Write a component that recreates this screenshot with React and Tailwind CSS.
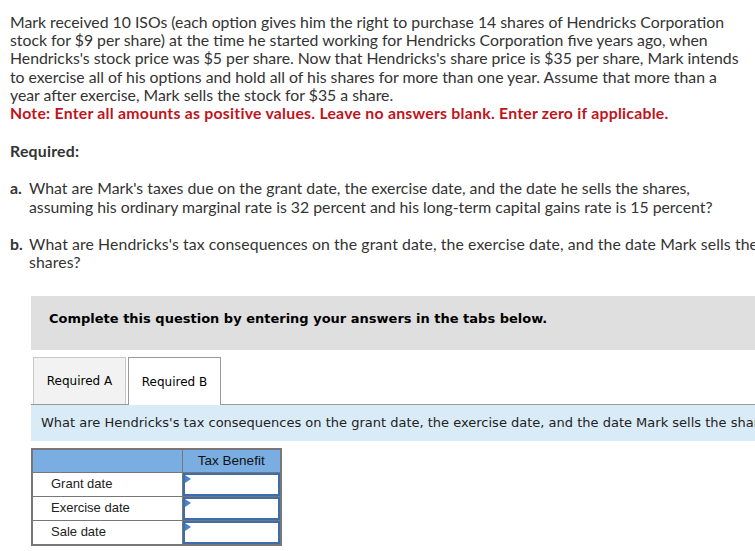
const bodyFont = { fontFamily: "Lato, 'Open Sans', sans-serif" };

function Line({ children }) {
  return <div className="whitespace-nowrap">{children}</div>;
}

function InputCell() {
  return (
    <td className="border border-[#777] p-0 h-[24px]">
      <div className="relative h-[23px] border-2 border-[#3c6eae] bg-white">
        <span className="absolute left-0 top-0 w-0 h-0 border-t-[4px] border-b-[4px] border-l-[6px] border-t-transparent border-b-transparent border-l-[#4a82c8]" />
      </div>
    </td>
  );
}

export default function App() {
  const rows = ["Grant date", "Exercise date", "Sale date"];
  return (
    <div className="w-[755px] h-[551px] overflow-hidden bg-white text-[#333]">
      <div className="pl-[10px] pt-[13px] text-[15.8px] leading-[18.2px]" style={bodyFont}>
        <Line>Mark received 10 ISOs (each option gives him the right to purchase 14 shares of Hendricks Corporation</Line>
        <Line>stock for $9 per share) at the time he started working for Hendricks Corporation five years ago, when</Line>
        <Line>Hendricks's stock price was $5 per share. Now that Hendricks's share price is $35 per share, Mark intends</Line>
        <Line>to exercise all of his options and hold all of his shares for more than one year. Assume that more than a</Line>
        <Line>year after exercise, Mark sells the stock for $35 a share.</Line>
        <Line>
          <span className="font-bold tracking-[0.25px] text-[#c0141c]">Note: Enter all amounts as positive values. Leave no answers blank. Enter zero if applicable.</span>
        </Line>

        <div className="mt-[20px] font-bold tracking-[0.25px]">Required:</div>

        <div className="mt-[19px] flex">
          <span className="font-bold w-[19px] shrink-0">a.</span>
          <div>
            <Line>What are Mark's taxes due on the grant date, the exercise date, and the date he sells the shares,</Line>
            <Line>assuming his ordinary marginal rate is 32 percent and his long-term capital gains rate is 15 percent?</Line>
          </div>
        </div>

        <div className="mt-[19px] flex tracking-[0.1px]">
          <span className="font-bold w-[19px] shrink-0">b.</span>
          <div>
            <Line>What are Hendricks's tax consequences on the grant date, the exercise date, and the date Mark sells the</Line>
            <Line>shares?</Line>
          </div>
        </div>
      </div>

      <div className="ml-[31px] mt-[25px]" style={{ fontFamily: "'DejaVu Sans', Verdana, sans-serif" }}>
        <div className="h-[54px] bg-[#dfdfdf] pt-[15px] pl-[18px] text-[13px] leading-[16px] font-bold text-black whitespace-nowrap">
          Complete this question by entering your answers in the tabs below.
        </div>

        <div className="mt-[7px] flex gap-[2px] pl-[2px] border-b border-[#999] text-[12px] text-black">
          <div className="w-[93px] h-[47px] flex items-center justify-center bg-[#f2f2f2] border border-b-0 border-[#c8c8c8]">
            Required A
          </div>
          <div className="w-[93px] h-[48px] -mb-px flex items-center justify-center bg-white border border-b-0 border-[#999]">
            Required B
          </div>
        </div>

        <div className="h-[36px] bg-[#daebf8] pt-[10px] pl-[10px] text-[13px] leading-[16px] text-[#222] whitespace-nowrap overflow-hidden">
          What are Hendricks's tax consequences on the grant date, the exercise date, and the date Mark sells the shares?
        </div>

        <table
          className="mt-[7px] border-collapse border-2 border-[#777] text-[13px] text-[#222]"
          style={{ fontFamily: "'Liberation Sans', Arial, sans-serif" }}
        >
          <thead>
            <tr className="bg-[#7aaee3]">
              <th className="w-[150px] h-[23px] border border-[#777]" />
              <th className="w-[99px] h-[23px] border border-[#777] font-normal text-[#111] text-[13.5px]">Tax Benefit</th>
            </tr>
          </thead>
          <tbody>
            {rows.map((r) => (
              <tr key={r}>
                <td className="border border-[#777] pl-[18px] h-[24px] text-left">{r}</td>
                <InputCell />
              </tr>
            ))}
          </tbody>
        </table>
      </div>
    </div>
  );
}
